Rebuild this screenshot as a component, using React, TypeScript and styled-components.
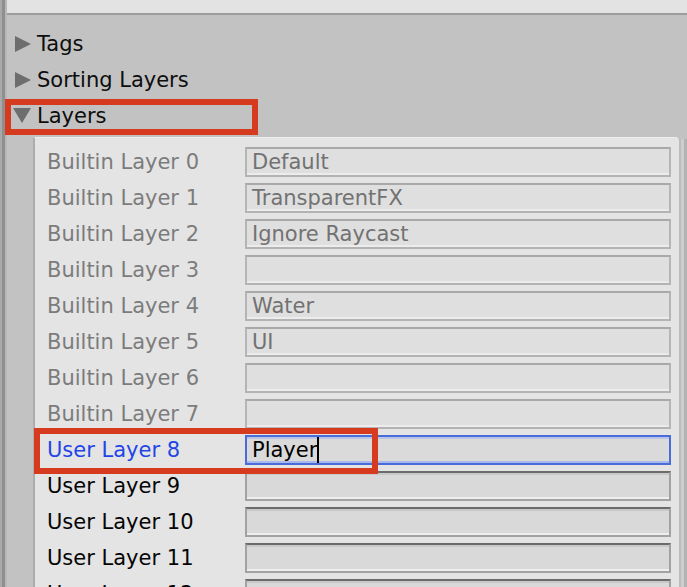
import React from "react";
import styled, { createGlobalStyle, css } from "styled-components";

const Global = createGlobalStyle`
  html, body {
    margin: 0;
    padding: 0;
    background: #c2c2c2;
    overflow: hidden;
  }
  * { box-sizing: border-box; }
`;

const Screen = styled.div`
  position: relative;
  display: flex;
  width: 687px;
  height: 587px;
  overflow: hidden;
  background: #c2c2c2;
  font-family: "DejaVu Sans", "Verdana", sans-serif;
  font-size: 21px;
`;

const LeftRail = styled.div`
  flex: 0 0 7px;
  background: linear-gradient(
    to right,
    #a9a9a9 0 2px,
    #8f8f8f 2px 5px,
    #b7b7b7 5px 7px
  );
`;

const Main = styled.div`
  flex: 1;
  min-width: 0;
  display: flex;
  flex-direction: column;
`;

const TopBar = styled.div`
  height: 15px;
  flex-shrink: 0;
  background: #e3e3e3;
  border-bottom: 2px solid #9d9d9d;
`;

const FoldoutList = styled.div`
  padding-top: 10px;
  display: flex;
  flex-direction: column;
`;

const Foldout = styled.div`
  height: 36px;
  display: flex;
  align-items: center;
  padding-left: 6px;
`;

const ArrowSlot = styled.div<{ $open: boolean }>`
  width: 24px;
  flex-shrink: 0;
  display: flex;
  align-items: center;
  padding-left: ${(p) => (p.$open ? 0 : 2)}px;
  padding-top: ${(p) => (p.$open ? 1 : 2)}px;
  svg { display: block; }
`;

const FoldoutLabel = styled.span`
  color: #0d0d0d;
  line-height: 36px;
  padding-top: 1px;
`;

const PanelArea = styled.div`
  flex: 1;
  display: flex;
  margin-top: 4px;
  padding-left: 26px;
`;

const Panel = styled.div`
  flex: 1;
  background: #e4e4e4;
  border-left: 2px solid #adadad;
  border-top: 1px solid #ededed;
  border-top-right-radius: 4px;
  padding: 5px 8px 0 12px;
`;

const RightGutter = styled.div`
  flex: 0 0 8px;
  margin-top: 2px;
  background: linear-gradient(
    to right,
    #bcbcbc 0 2px,
    #cdcdcd 2px 5px,
    #b3b3b3 5px 8px
  );
`;

const Row = styled.div`
  display: grid;
  grid-template-columns: 198px 1fr;
  align-items: center;
  height: 36px;
`;

type Kind = "builtin" | "user" | "selected";

const Label = styled.span<{ $kind: Kind }>`
  line-height: 36px;
  padding-top: 1px;
  white-space: nowrap;
  color: ${(p) =>
    p.$kind === "builtin" ? "#7c7c7c" : p.$kind === "selected" ? "#1f45e6" : "#050505"};
`;

const Field = styled.div<{ $kind: Kind }>`
  height: 30px;
  padding: 0 5px;
  line-height: 26px;
  white-space: nowrap;
  overflow: hidden;
  border: 2px solid;
  ${(p) =>
    p.$kind === "builtin"
      ? css`
          background: #dfdfdf;
          color: #727272;
          border-color: #a9a9a9 #b5b5b5 #b3b3b3 #b5b5b5;
          box-shadow: inset 0 -2px 0 #ececec;
        `
      : p.$kind === "selected"
      ? css`
          background: #dadada;
          color: #000;
          border-color: #4a6cdb;
          box-shadow: inset 0 -2px 0 #a9b8ea, inset 0 2px 0 #b9c4e6;
        `
      : css`
          background: #d9d9d9;
          color: #000;
          border-color: #6b6b6b #a2a2a2 #a3a3a3 #a2a2a2;
          box-shadow: inset 0 2px 0 #c9c9c9, inset 0 -2px 0 #eeeeee;
        `}
`;

const Caret = styled.span`
  display: inline-block;
  width: 2px;
  height: 26px;
  vertical-align: top;
  background: #000;
`;

const Callout = styled.div<{ $x: number; $y: number; $w: number; $h: number }>`
  position: absolute;
  left: ${(p) => p.$x}px;
  top: ${(p) => p.$y}px;
  width: ${(p) => p.$w}px;
  height: ${(p) => p.$h}px;
  border: 6px solid #d63a1f;
  pointer-events: none;
`;

const RightArrow = () => (
  <svg width="16" height="16" viewBox="0 0 16 16">
    <polygon points="0,0 16,8 0,16" fill="#6d6d6d" />
  </svg>
);

const DownArrow = () => (
  <svg width="18" height="15" viewBox="0 0 18 15">
    <polygon points="0,0 18,0 9,15" fill="#6d6d6d" />
  </svg>
);

const foldouts = [
  { name: "Tags", open: false },
  { name: "Sorting Layers", open: false },
  { name: "Layers", open: true },
];

const layers: { label: string; value: string; kind: Kind }[] = [
  { label: "Builtin Layer 0", value: "Default", kind: "builtin" },
  { label: "Builtin Layer 1", value: "TransparentFX", kind: "builtin" },
  { label: "Builtin Layer 2", value: "Ignore Raycast", kind: "builtin" },
  { label: "Builtin Layer 3", value: "", kind: "builtin" },
  { label: "Builtin Layer 4", value: "Water", kind: "builtin" },
  { label: "Builtin Layer 5", value: "UI", kind: "builtin" },
  { label: "Builtin Layer 6", value: "", kind: "builtin" },
  { label: "Builtin Layer 7", value: "", kind: "builtin" },
  { label: "User Layer 8", value: "Player", kind: "selected" },
  { label: "User Layer 9", value: "", kind: "user" },
  { label: "User Layer 10", value: "", kind: "user" },
  { label: "User Layer 11", value: "", kind: "user" },
  { label: "User Layer 12", value: "", kind: "user" },
];

export default function App() {
  return (
    <>
      <Global />
      <Screen>
        <LeftRail />
        <Main>
          <TopBar />
          <FoldoutList>
            {foldouts.map((f) => (
              <Foldout key={f.name}>
                <ArrowSlot $open={f.open}>{f.open ? <DownArrow /> : <RightArrow />}</ArrowSlot>
                <FoldoutLabel>{f.name}</FoldoutLabel>
              </Foldout>
            ))}
          </FoldoutList>
          <PanelArea>
            <Panel>
              {layers.map((l) => (
                <Row key={l.label}>
                  <Label $kind={l.kind}>{l.label}</Label>
                  <Field $kind={l.kind}>
                    {l.value}
                    {l.kind === "selected" && <Caret />}
                  </Field>
                </Row>
              ))}
            </Panel>
            <RightGutter />
          </PanelArea>
        </Main>
        <Callout $x={5} $y={99} $w={253} $h={36} />
        <Callout $x={34} $y={428} $w={344} $h={46} />
      </Screen>
    </>
  );
}
